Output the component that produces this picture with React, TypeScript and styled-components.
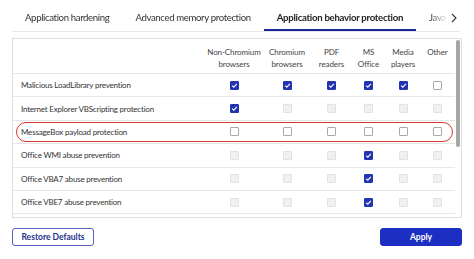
import React from "react";
import styled, { createGlobalStyle } from "styled-components";

const Global = createGlobalStyle`
  html, body { margin: 0; padding: 0; background: #ffffff; }
  body { font-family: "Lato", "Open Sans", sans-serif; color: #333; }
  * { box-sizing: border-box; }
`;

const Page = styled.div`
  width: 474px;
  height: 259px;
  padding: 0 12px;
  display: flex;
  flex-direction: column;
`;

const TabBar = styled.div`
  display: flex;
  align-items: stretch;
  height: 32px;
  border-bottom: 1px solid #e6e6e6;
  margin-right: 2px;
`;

const Tabs = styled.div`
  flex: 1;
  min-width: 0;
  display: flex;
  overflow: hidden;
  -webkit-mask-image: linear-gradient(to right, #000 0, #000 calc(100% - 18px), transparent 100%);
  mask-image: linear-gradient(to right, #000 0, #000 calc(100% - 18px), transparent 100%);
`;

const Tab = styled.div<{ $active?: boolean }>`
  flex: none;
  padding: 0 13px;
  height: 31px;
  display: flex;
  align-items: center;
  padding-top: 5px;
  font-size: 9.6px;
  letter-spacing: ${(p) => (p.$active ? "-0.28px" : "-0.36px")};
  white-space: nowrap;
  font-weight: ${(p) => (p.$active ? 700 : 400)};
  color: ${(p) => (p.$active ? "#222" : "#333")};
  border-bottom: 2px solid ${(p) => (p.$active ? "#1b2796" : "transparent")};
`;

const Chevron = styled.div`
  flex: none;
  width: 12px;
  display: flex;
  align-items: center;
  justify-content: center;
  padding-top: 4px;
`;

const Panel = styled.div`
  margin-top: 6px;
  height: 180px;
  border: 1px solid #dedede;
  display: flex;
  overflow: hidden;
`;

const Table = styled.div`
  flex: 1;
  display: flex;
  flex-direction: column;
`;

const COLS = "1fr 56px 50px 39px 35px 34px 35px";

const HeaderRow = styled.div`
  display: grid;
  grid-template-columns: ${COLS};
  height: 35px;
  align-items: start;
  padding-top: 7px;
  border-bottom: 1px solid #e6e6e6;
`;

const HeadCell = styled.div`
  font-size: 8px;
  line-height: 12px;
  letter-spacing: -0.1px;
  text-align: center;
  color: #444;
`;

const Row = styled.div`
  position: relative;
  display: grid;
  grid-template-columns: ${COLS};
  height: 23.4px;
  flex: none;
  align-items: center;
  border-bottom: 1px solid #e6e6e6;
`;

const Label = styled.div`
  font-size: 8px;
  letter-spacing: -0.2px;
  color: #333;
  padding-left: 8px;
  white-space: nowrap;
`;

const Cell = styled.div`
  display: flex;
  justify-content: center;
  align-items: center;
`;

const Box = styled.span<{ $state: "on" | "off" | "dis" }>`
  width: 9px;
  height: 9px;
  border-radius: 1px;
  display: flex;
  align-items: center;
  justify-content: center;
  background: ${(p) => (p.$state === "on" ? "#2234b0" : p.$state === "dis" ? "#f0f0f0" : "#ffffff")};
  border: 1px solid ${(p) => (p.$state === "on" ? "#2234b0" : p.$state === "dis" ? "#e2e2e2" : "#a9a9a9")};
`;

const Highlight = styled.div`
  position: absolute;
  left: 3px;
  right: 2px;
  top: 1px;
  bottom: 1px;
  border: 1.5px solid #d8382e;
  border-radius: 11px;
  pointer-events: none;
`;

const ScrollTrack = styled.div`
  flex: none;
  width: 6px;
  padding: 1px 1px 0 1px;
`;

const Thumb = styled.div`
  width: 4px;
  height: 107px;
  border-radius: 2px;
  background: #a6a6a6;
`;

const Footer = styled.div`
  margin-top: 10px;
  display: flex;
  justify-content: space-between;
`;

const Button = styled.button<{ $primary?: boolean }>`
  width: 82px;
  height: 18px;
  border-radius: 3px;
  font-family: "Lato", "Open Sans", sans-serif;
  font-weight: 700;
  font-size: 8.5px;
  padding: 0;
  cursor: pointer;
  background: ${(p) => (p.$primary ? "#1d2ec2" : "#ffffff")};
  color: ${(p) => (p.$primary ? "#ffffff" : "#26318f")};
  border: 1px solid ${(p) => (p.$primary ? "#1d2ec2" : "#5560c4")};
`;

type S = "on" | "off" | "dis";

const rows: { label: string; cells: S[]; highlight?: boolean }[] = [
  { label: "Malicious LoadLibrary prevention", cells: ["on", "on", "on", "on", "on", "off"] },
  { label: "Internet Explorer VBScripting protection", cells: ["on", "dis", "dis", "dis", "dis", "dis"] },
  { label: "MessageBox payload protection", cells: ["off", "off", "off", "off", "off", "off"], highlight: true },
  { label: "Office WMI abuse prevention", cells: ["dis", "dis", "dis", "on", "dis", "dis"] },
  { label: "Office VBA7 abuse prevention", cells: ["dis", "dis", "dis", "on", "dis", "dis"] },
  { label: "Office VBE7 abuse prevention", cells: ["dis", "dis", "dis", "on", "dis", "dis"] },
];

const heads = [
  ["Non-Chromium", "browsers"],
  ["Chromium", "browsers"],
  ["PDF", "readers"],
  ["MS", "Office"],
  ["Media", "players"],
  ["Other"],
];

const Check = ({ state }: { state: S }) => (
  <Box $state={state}>
    {state === "on" && (
      <svg width="7" height="7" viewBox="0 0 7 7">
        <polyline points="1.2,3.6 2.8,5.1 5.9,1.8" fill="none" stroke="#fff" strokeWidth="1.1" />
      </svg>
    )}
  </Box>
);

export default function App() {
  return (
    <>
      <Global />
      <Page>
        <TabBar>
          <Tabs>
            <Tab>Application hardening</Tab>
            <Tab>Advanced memory protection</Tab>
            <Tab $active>Application behavior protection</Tab>
            <Tab>Java</Tab>
          </Tabs>
          <Chevron>
            <svg width="6" height="10" viewBox="0 0 6 10">
              <polyline points="1,1 5,5 1,9" fill="none" stroke="#333" strokeWidth="1.1" />
            </svg>
          </Chevron>
        </TabBar>
        <Panel>
          <Table>
            <HeaderRow>
              <div />
              {heads.map((h, i) => (
                <HeadCell key={i}>
                  {h.map((l, j) => (
                    <div key={j}>{l}</div>
                  ))}
                </HeadCell>
              ))}
            </HeaderRow>
            {rows.map((r, i) => (
              <Row key={i}>
                <Label>{r.label}</Label>
                {r.cells.map((c, j) => (
                  <Cell key={j}>
                    <Check state={c} />
                  </Cell>
                ))}
                {r.highlight && <Highlight />}
              </Row>
            ))}
          </Table>
          <ScrollTrack>
            <Thumb />
          </ScrollTrack>
        </Panel>
        <Footer>
          <Button>Restore Defaults</Button>
          <Button $primary>Apply</Button>
        </Footer>
      </Page>
    </>
  );
}
